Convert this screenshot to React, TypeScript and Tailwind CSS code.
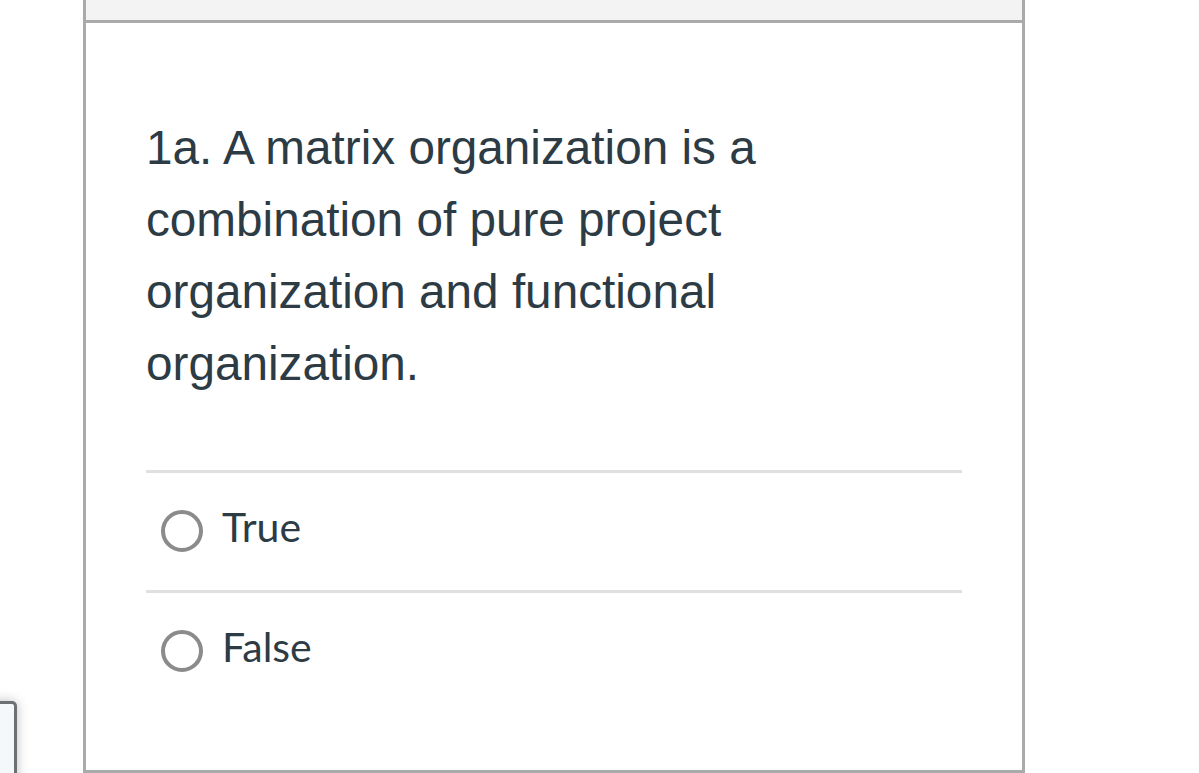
import React from 'react';

const answers = ['True', 'False'];

export default function App() {
  return (
    <div className="relative w-[1199px] h-[773px] overflow-hidden bg-white">
      <div className="ml-[83px] w-[942px] h-[773px] border-x-[3px] border-b-[3px] border-[#aaaaaa] flex flex-col">
        <div className="h-[23px] bg-[#f3f3f3] border-b-[3px] border-[#aaaaaa] shrink-0" />
        <div className="pl-[60px] pr-[60px] pt-[89px]">
          <p
            className="text-[47.7px] leading-[72px] text-[#2d3b45]"
            style={{ fontFamily: '"Liberation Sans", Arial, sans-serif' }}
          >
            1a. A matrix organization is a combination of pure project organization and functional organization.
          </p>
          <div className="mt-[70px]">
            {answers.map((a) => (
              <div key={a}>
                <div className="h-[3px] bg-[#e0e0e0]" />
                <div className="h-[117px] flex items-center pl-[15px]">
                  <span className="w-[42px] h-[42px] rounded-full border-[4px] border-[#8b8b8b] shrink-0 -mt-[2px]" />
                  <span
                    className="ml-[19px] pb-[9px] text-[41px] text-[#2d3b45]"
                    style={{ fontFamily: 'Lato, sans-serif' }}
                  >
                    {a}
                  </span>
                </div>
              </div>
            ))}
          </div>
        </div>
      </div>
      <div className="absolute left-[-10px] top-[701px] w-[27px] h-[90px] bg-[#f5f8fa] border-[3px] border-[#6b7075] rounded-[5px] shadow-[0_0_12px_rgba(0,0,0,0.25)]" />
    </div>
  );
}
